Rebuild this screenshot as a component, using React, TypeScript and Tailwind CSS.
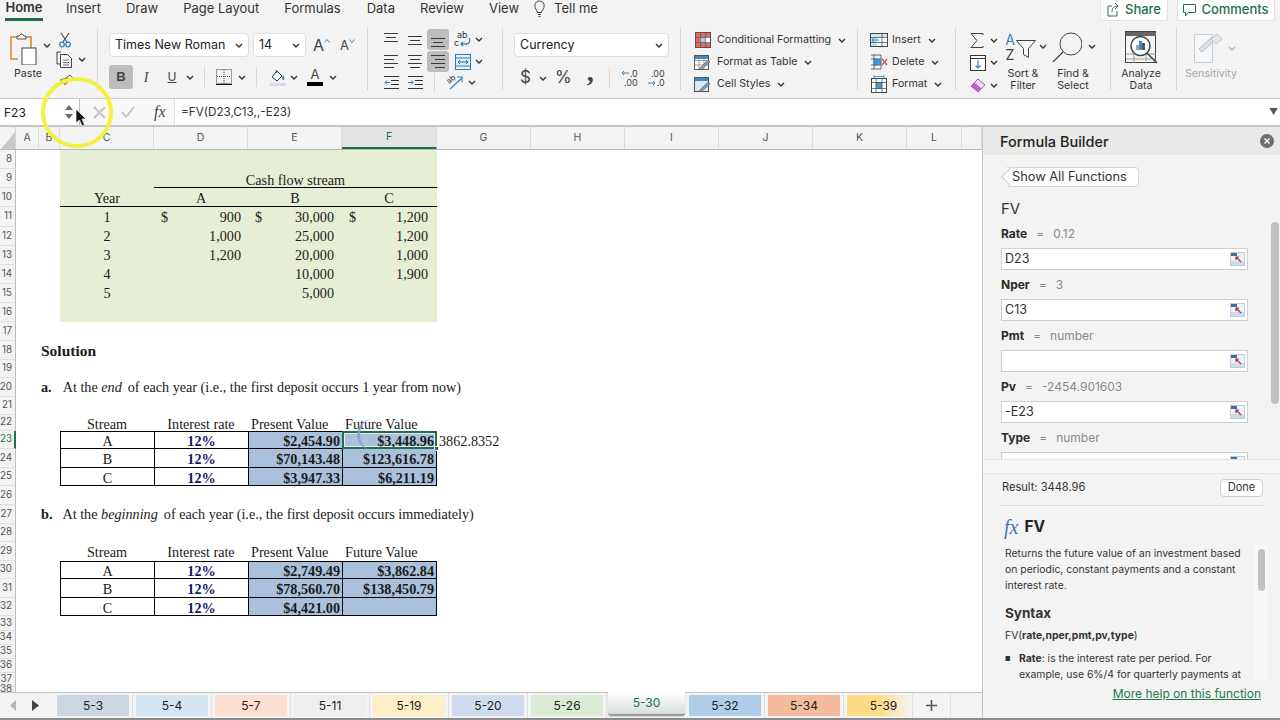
import React from 'react';

const Svg = ({ w, h, className, children }: { w: number; h: number; className?: string; children: React.ReactNode }) => (
  <svg width={w} height={h} viewBox={`0 0 ${w} ${h}`} fill="none" className={`shrink-0 ${className || ''}`}>
    {children}
  </svg>
);

const Caret = ({ className = '', color = '#333' }: { className?: string; color?: string }) => (
  <Svg w={8} h={5} className={className}>
    <path d="M1 1l3 3 3-3" stroke={color} strokeWidth="1.4" />
  </Svg>
);

// three or four horizontal strokes, used by the alignment buttons
const Lines = ({ rows }: { rows: number[][] }) => (
  <Svg w={16} h={16}>
    {rows.map((r, i) => (
      <path key={i} d={`M${r[0]} ${r[2]}.5H${r[1]}`} stroke="#3a3a3a" strokeWidth="1" />
    ))}
  </Svg>
);

const PasteIcon = () => (
  <Svg w={30} h={32}>
    <path d="M8 4H2v22h7" stroke="#e0a050" strokeWidth="2" />
    <path d="M17 4h5v11" stroke="#e0a050" strokeWidth="2" />
    <path d="M8 5V3h2l2-2h1l2 2h2v3H8z" fill="#f3f3f3" stroke="#555" />
    <rect x="13" y="15" width="14" height="17" fill="#fff" stroke="#444" />
  </Svg>
);

const CutIcon = () => (
  <Svg w={12} h={16}>
    <path d="M2 1l6 9M10 1L4 10" stroke="#444" strokeWidth="1.1" />
    <circle cx="3" cy="12.500" r="2.300" stroke="#2f7fbf" strokeWidth="1.3" />
    <circle cx="9" cy="12.500" r="2.300" stroke="#2f7fbf" strokeWidth="1.3" />
  </Svg>
);

const CopyIcon = () => (
  <Svg w={17} h={17}>
    <path d="M5 1H1v12h3" stroke="#444" />
    <path d="M4.500 3.500h7l4 4v9h-11z" fill="#f6f6f6" stroke="#444" />
    <path d="M7 9h6M7 11.500h6M7 14h6" stroke="#555" strokeWidth=".8" />
  </Svg>
);

const PainterIcon = () => (
  <Svg w={15} h={12}>
    <path d="M1 6l5 5 4-4-3-3z" fill="#e9a76a" stroke="#d07b35" />
    <path d="M7 4l4-3 3 3-3 3z" fill="#f2f2f2" stroke="#555" />
  </Svg>
);

const FillIcon = () => (
  <Svg w={16} h={19}>
    <path d="M2 9l5-6 5 5-5 5z" fill="#fff" stroke="#333" />
    <path d="M6 2l1 3" stroke="#333" />
    <path d="M13 7c1 2 2 3 1 5-1 0-2-1-2-2z" fill="#2f7fbf" />
    <rect x="0" y="15" width="16" height="3" fill="#d3dde9" />
  </Svg>
);

const BorderIcon = () => (
  <Svg w={16} h={16}>
    <rect x=".5" y=".5" width="15" height="14" stroke="#444" strokeDasharray="1 1" />
    <path d="M8 1v13M1 7.500h14" stroke="#444" strokeDasharray="1 1" />
    <path d="M0 15.500h16" stroke="#111" />
  </Svg>
);

const WrapIcon = () => (
  <div className="relative w-[18px] h-[18px] text-[9px] leading-[8px] text-[#333]">
    <div className="pl-[3px]">ab</div>
    <div>c</div>
    <Svg w={18} h={18} className="absolute left-0 top-0">
      <path d="M15 7c2 3 0 6-3 6H7m2-2l-2 2 2 2" stroke="#2f86c4" strokeWidth="1.3" />
    </Svg>
  </div>
);

const MergeIcon = () => (
  <Svg w={16} h={16}>
    <rect x=".5" y=".5" width="15" height="15" fill="#e4f0f8" stroke="#2c7db5" />
    <path d="M1 4h14M1 12h14" stroke="#2c7db5" />
    <path d="M3 8h10M5 6L3 8l2 2M11 6l2 2-2 2" stroke="#1f6fa6" />
  </Svg>
);

const IndentIcon = ({ right }: { right?: boolean }) => (
  <Svg w={15} h={13}>
    <path d="M0 .5h15M7 4.500h8M7 8.500h8M0 12.500h15" stroke="#333" />
    {right ? <path d="M0 6.500h5M3 4.500l2 2-2 2" stroke="#2f86c4" /> : <path d="M6 6.500H1M3 4.500l-2 2 2 2" stroke="#2f86c4" />}
  </Svg>
);

const OrientIcon = () => (
  <div className="relative w-[18px] h-[17px]">
    <span className="absolute left-0 top-[1px] text-[8px] leading-[8px] text-[#333] -rotate-40">ab</span>
    <Svg w={18} h={17} className="absolute left-0 top-0">
      <path d="M4 15L16 4M11 3h5v5" stroke="#2f86c4" strokeWidth="1.2" />
    </Svg>
  </div>
);

const DecimalIcon = ({ more }: { more?: boolean }) => (
  <div className="relative w-[17px] h-[18px] text-[9px] leading-[9px] text-[#444]">
    <div className="text-right">{more ? '.0' : '.00'}</div>
    <div className="text-right">{more ? '.00' : '.0'}</div>
    <Svg w={8} h={6} className={`absolute left-0 ${more ? 'top-[1px]' : 'top-[11px]'}`}>
      <path d={more ? 'M8 3H1m2-2L1 3l2 2' : 'M0 3h7M5 1l2 2-2 2'} stroke="#2f86c4" />
    </Svg>
  </div>
);

const CondIcon = () => (
  <Svg w={16} h={16}>
    <rect x=".5" y=".5" width="15" height="15" fill="#fff" stroke="#555" />
    <rect x="1" y="1" width="14" height="4" fill="#e66767" />
    <rect x="1" y="11" width="14" height="4" fill="#e66767" />
    <rect x="1" y="5" width="4" height="6" fill="#e66767" />
    <rect x="6" y="5" width="4" height="6" fill="#a9cbe6" />
    <path d="M5.500 1v14M10.500 1v14M1 5.500h14M1 10.500h14" stroke="#555" strokeWidth=".7" />
  </Svg>
);

const TableIcon = () => (
  <Svg w={17} h={17}>
    <rect x=".5" y="1.500" width="14" height="14" fill="#fff" stroke="#555" />
    <rect x="1" y="2" width="13" height="3" fill="#3d8cc4" />
    <path d="M5 2v13M10 2v13M1 6.500h13M1 11h13" stroke="#777" strokeWidth=".7" />
    <path d="M5 15l9-9 2 2-9 8z" fill="#8d9aa6" stroke="#555" strokeWidth=".6" />
  </Svg>
);

const StyleIcon = () => (
  <Svg w={17} h={17}>
    <rect x=".5" y="1.500" width="14" height="14" fill="#d7e7f3" stroke="#555" />
    <rect x="1" y="2" width="13" height="3" fill="#3d8cc4" />
    <path d="M5 15l9-9 2 2-9 8z" fill="#8d9aa6" stroke="#555" strokeWidth=".6" />
  </Svg>
);

const InsertIcon = () => (
  <Svg w={18} h={14}>
    <rect x=".5" y=".5" width="17" height="13" fill="#fff" stroke="#444" />
    <rect x="1" y="1" width="6" height="12" fill="#bfe0f3" />
    <rect x="1" y="1" width="16" height="3" fill="#cfe6f5" />
    <path d="M1 4.500h16M1 9.500h16M12 1v12" stroke="#444" strokeWidth=".7" />
    <path d="M9 7H2m2-2L2 7l2 2" stroke="#2f86c4" />
  </Svg>
);

const DeleteIcon = () => (
  <Svg w={18} h={16}>
    <path d="M1 1h10M1 5h6M1 11h6M1 15h10M4 1v14M11 1v4M11 11v4" stroke="#444" strokeWidth=".8" />
    <rect x="4" y="5" width="7" height="6" fill="#4a98cf" stroke="#2c7db5" />
    <path d="M12 5l5 6M17 5l-5 6" stroke="#e04a4a" strokeWidth="1.3" />
  </Svg>
);

const FormatIcon = () => (
  <Svg w={17} h={18}>
    <rect x=".5" y="3.500" width="15" height="14" fill="#fff" stroke="#444" />
    <rect x="5" y="7" width="6" height="7" fill="#4a98cf" />
    <path d="M5 4v13M11 4v13M1 7.500h14M1 13.500h14" stroke="#444" strokeWidth=".7" />
    <path d="M3 1.500h10M3 0v3M13 0v3" stroke="#2f86c4" strokeWidth=".8" />
  </Svg>
);

const SumIcon = () => (
  <Svg w={14} h={15}>
    <path d="M13 2V.5H1L7 7.500l-6 7h12V13" stroke="#444" />
  </Svg>
);

const FillDownIcon = () => (
  <Svg w={16} h={16}>
    <rect x=".5" y=".5" width="15" height="15" fill="#fff" stroke="#333" />
    <path d="M1 3.500h14" stroke="#333" />
    <path d="M8 5v8M5.500 10.500L8 13l2.500-2.500" stroke="#2f86c4" strokeWidth="1.2" />
  </Svg>
);

const EraserIcon = () => (
  <Svg w={16} h={15}>
    <path d="M1 8l7-7 7 6-7 7z" fill="#f5d7f3" stroke="#a55bb8" />
    <path d="M1 8l3.500-3.500 7 6L8 14z" fill="#b667c9" />
  </Svg>
);

const SortIcon = () => (
  <div className="flex w-[32px] h-[30px]">
    <div className="w-[12px] flex flex-col items-center text-[14px] leading-[15px]">
      <span className="text-[#2f86c4]">A</span>
      <span className="text-[#444]">Z</span>
    </div>
    <Svg w={20} h={30}>
      <path d="M.5 8.500h19l-7 8v9l-5-3v-6z" fill="#f6f6f6" stroke="#444" />
    </Svg>
  </div>
);

const SearchIcon = () => (
  <Svg w={30} h={30}>
    <circle cx="19" cy="12" r="11" stroke="#444" />
    <path d="M11 20L1 30" stroke="#444" strokeWidth="1.2" />
  </Svg>
);

const AnalyzeIcon = () => (
  <Svg w={33} h={33}>
    <rect x=".5" y=".5" width="30" height="31" fill="#f6f6f6" stroke="#444" />
    <rect x="1" y="1" width="30" height="4" fill="#666" />
    <path d="M1 23h30M1 28h30M9 23v9M21 23v9" stroke="#999" />
    <circle cx="15.500" cy="15" r="9.500" fill="#fff" stroke="#444" strokeWidth="1.5" />
    <rect x="11" y="14" width="3" height="5" fill="#9aa4ad" />
    <rect x="14" y="10" width="3" height="9" fill="#3d8cc4" />
    <rect x="17" y="12" width="3" height="7" fill="#555" />
    <path d="M22 22l10 10" stroke="#444" strokeWidth="1.6" />
  </Svg>
);

const SensitivityIcon = () => (
  <Svg w={30} h={29}>
    <path d="M.5.500h18v28H.5z" fill="#f6f6f6" stroke="#bcd3df" />
    <path d="M5 15L18 3l3 3L8 18z" fill="#dfe2e4" stroke="#b8bcc0" />
    <path d="M17 5l6-5 5 5-6 5z" fill="#e4e6e8" stroke="#c0c4c8" />
  </Svg>
);

const RefIcon = () => (
  <Svg w={15} h={14}>
    <rect x=".5" y=".5" width="14" height="13" fill="#eef3f8" stroke="#c4ccd4" />
    <rect x="1" y="1" width="6" height="3" fill="#3c6ea8" />
    <rect x="1" y="9" width="13" height="4" fill="#cddcea" />
    <path d="M11 10L6 5M6 8V5h3" stroke="#a8323c" strokeWidth="1.2" />
  </Svg>
);

const Select = ({ label, w }: { label: string; w: string }) => (
  <div className={`${w} h-[24px] flex items-center justify-between pl-[5px] pr-[5px] bg-white border border-[#dedede] rounded-[4px] text-[12.500px] text-[#222]`}>
    <span>{label}</span>
    <Caret />
  </div>
);

const Group = ({ w, className = '', children }: { w: string; className?: string; children: React.ReactNode }) => (
  <div className={`${w} shrink-0 h-[62px] mt-[2px] border-r border-[#d6d6d6] ${className}`}>{children}</div>
);

const StyleRow = ({ icon, label, w, gap = 'ml-[6px]' }: { icon: React.ReactNode; label: string; w: string; gap?: string }) => (
  <div className="flex items-center h-[22px]">
    <div className={`${w} flex justify-center`}>{icon}</div>
    <span className={`${gap} text-[10.700px] text-[#333] whitespace-nowrap`}>{label}</span>
    <Caret className="ml-[7px]" />
  </div>
);

const Ribbon = () => (
  <div className="h-[99px] bg-[#f3f3f3] border-b border-[#c9c9c9] relative">
    <div className="flex h-[26px] text-[13px] text-[#333]">
      <div className="ml-[5px] w-[38px] h-[21px] border-b-[3px] border-[#1f6e47] flex justify-center">
        <span className="font-semibold -mt-[2px]">Home</span>
      </div>
      <span className="ml-[23px] -mt-[1px]">Insert</span>
      <span className="ml-[25px] -mt-[1px]">Draw</span>
      <span className="ml-[25px] -mt-[1px]">Page Layout</span>
      <span className="ml-[25px] -mt-[1px]">Formulas</span>
      <span className="ml-[26px] -mt-[1px]">Data</span>
      <span className="ml-[25px] -mt-[1px]">Review</span>
      <span className="ml-[25px] -mt-[1px]">View</span>
      <Svg w={13} h={17} className="ml-[14px]">
        <path d="M3.500 10C1 7.500 1 1 6.500 1S12 7.500 9.500 10c-.5.5-1 1.500-1 2.500h-4c0-1-.500-2-1-2.500zM5 14.500h3M5.500 16.500h2" stroke="#444" />
      </Svg>
      <span className="ml-[8px] -mt-[1px]">Tell me</span>
      <div className="ml-auto flex text-[#22704c] font-medium">
        <div className="w-[68px] h-[21px] flex items-center justify-center gap-[5px] bg-white border border-t-0 border-[#e2e2e2] rounded-b-[3px]">
          <Svg w={13} h={14}>
            <path d="M5 3H1v10h9V8M5 9c0-4 2-6 6-6M8 0l3 3-3 3" stroke="#22704c" />
          </Svg>
          Share
        </div>
        <div className="ml-[9px] mr-[5px] w-[98px] h-[21px] flex items-center justify-center gap-[5px] bg-white border border-t-0 border-[#e2e2e2] rounded-b-[3px]">
          <Svg w={13} h={14}>
            <path d="M.5 1.500h12v8H5L2.500 13V9.500h-2z" stroke="#22704c" />
          </Svg>
          Comments
        </div>
      </div>
    </div>

    <div className="flex h-[72px]">
      {/* Clipboard */}
      <Group w="w-[98px]" className="flex">
        <div className="w-[47px] ml-[9px] pt-[5px] flex flex-col items-start">
          <div className="flex items-center">
            <PasteIcon />
            <Caret className="ml-[4px] -mt-[8px]" />
          </div>
          <span className="ml-[5px] mt-[1px] text-[10.700px] text-[#333]">Paste</span>
        </div>
        <div className="pt-[4px] flex flex-col items-start">
          <div className="ml-[3px]"><CutIcon /></div>
          <div className="flex items-center mt-[3px]">
            <CopyIcon />
            <Caret className="ml-[5px]" />
          </div>
          <div className="ml-[3px] mt-[6px]"><PainterIcon /></div>
        </div>
      </Group>

      {/* Font */}
      <Group w="w-[270px]" className="pl-[11px] pt-[5px]">
        <div className="flex items-center">
          <Select label="Times New Roman" w="w-[140px]" />
          <Select label="14" w="w-[53px] ml-[4px]" />
          <span className="ml-[7px] text-[16px] text-[#444] leading-none">A</span>
          <Svg w={6} h={4} className="-mt-[8px]"><path d="M.5 3.500l2.500-3 2.500 3" stroke="#2f86c4" /></Svg>
          <span className="ml-[10px] text-[13px] text-[#444] leading-none">A</span>
          <Svg w={6} h={4} className="-mt-[8px]"><path d="M.5.500l2.500 3 2.500-3" stroke="#2f86c4" /></Svg>
        </div>
        <div className="flex items-center mt-[8px] h-[24px] text-[#444]">
          <div className="w-[24px] h-[24px] bg-[#bdbdbd] rounded-[3px] flex items-center justify-center font-['Liberation_Sans',sans-serif] font-bold text-[13px]">B</div>
          <span className="ml-[8px] w-[10px] text-center font-['Liberation_Serif',serif] italic text-[14px]">I</span>
          <span className="ml-[16px] w-[10px] text-center underline text-[12px]">U</span>
          <Caret className="ml-[9px]" />
          <div className="ml-[10px] w-px h-[20px] bg-[#d6d6d6]" />
          <div className="ml-[11px]"><BorderIcon /></div>
          <Caret className="ml-[6px]" />
          <div className="ml-[10px] w-px h-[20px] bg-[#d6d6d6]" />
          <div className="ml-[13px]"><FillIcon /></div>
          <Caret className="ml-[4px]" />
          <div className="ml-[9px] w-[16px] flex flex-col items-center">
            <span className="text-[13px] leading-[13px]">A</span>
            <div className="w-[16px] h-[4px] mt-[1px] bg-black" />
          </div>
          <Caret className="ml-[6px]" />
        </div>
      </Group>

      {/* Alignment */}
      <Group w="w-[135px]" className="pl-[11px] pt-[1px]">
        <div className="flex items-center h-[21px]">
          <div className="w-[24px] flex justify-center"><Lines rows={[[1, 15, 1], [3, 13, 5], [1, 15, 9]]} /></div>
          <div className="w-[24px] flex justify-center"><Lines rows={[[1, 15, 4], [3, 13, 8], [1, 15, 12]]} /></div>
          <div className="w-[22px] h-[21px] bg-[#bdbdbd] rounded-[3px] flex justify-center items-center"><Lines rows={[[1, 15, 6], [3, 13, 10], [1, 15, 14]]} /></div>
          <div className="ml-[5px]"><WrapIcon /></div>
          <Caret className="ml-[3px]" />
        </div>
        <div className="flex items-center h-[21px] mt-[1px]">
          <div className="w-[24px] flex justify-center"><Lines rows={[[1, 15, 1], [1, 11, 5], [1, 15, 9], [1, 11, 13]]} /></div>
          <div className="w-[24px] flex justify-center"><Lines rows={[[1, 15, 1], [3, 13, 5], [1, 15, 9], [3, 13, 13]]} /></div>
          <div className="w-[22px] h-[21px] bg-[#bdbdbd] rounded-[3px] flex justify-center items-center"><Lines rows={[[1, 15, 1], [5, 15, 5], [1, 15, 9], [5, 15, 13]]} /></div>
          <div className="ml-[6px]"><MergeIcon /></div>
          <Caret className="ml-[4px]" />
        </div>
        <div className="flex items-center h-[20px]">
          <div className="w-[24px] flex justify-center"><IndentIcon /></div>
          <div className="w-[24px] flex justify-center"><IndentIcon right /></div>
          <div className="ml-[7px] w-px h-[19px] bg-[#d6d6d6]" />
          <div className="ml-[11px]"><OrientIcon /></div>
          <Caret className="ml-[4px]" />
        </div>
      </Group>

      {/* Number */}
      <Group w="w-[178px]" className="pl-[11px] pt-[5px]">
        <Select label="Currency" w="w-[155px]" />
        <div className="flex items-center mt-[10px] h-[22px] text-[#444]">
          <span className="ml-[6px] w-[10px] text-[17px] text-center">$</span>
          <Caret className="ml-[9px]" />
          <span className="ml-[8px] text-[17px]">%</span>
          <span className="ml-[15px] font-['Liberation_Serif',serif] font-bold text-[28px] leading-none -mt-[13px]">,</span>
          <div className="ml-[15px] w-px h-[19px] bg-[#d6d6d6]" />
          <div className="ml-[11px]"><DecimalIcon more /></div>
          <div className="ml-[10px]"><DecimalIcon /></div>
        </div>
      </Group>

      {/* Styles */}
      <Group w="w-[177px]" className="pl-[13px] pt-[0px]">
        <div className="pt-[1px]">
          <StyleRow icon={<CondIcon />} label="Conditional Formatting" w="w-[17px]" />
          <StyleRow icon={<TableIcon />} label="Format as Table" w="w-[17px]" />
          <StyleRow icon={<StyleIcon />} label="Cell Styles" w="w-[17px]" />
        </div>
      </Group>

      {/* Cells */}
      <Group w="w-[98px]" className="pl-[12px]">
        <div className="pt-[1px]">
          <StyleRow icon={<InsertIcon />} label="Insert" w="w-[18px]" gap="ml-[4px]" />
          <StyleRow icon={<DeleteIcon />} label="Delete" w="w-[18px]" gap="ml-[4px]" />
          <StyleRow icon={<FormatIcon />} label="Format" w="w-[18px]" gap="ml-[4px]" />
        </div>
      </Group>

      {/* Editing */}
      <Group w="w-[155px]" className="flex pl-[14px]">
        <div className="w-[32px] pt-[1px]">
          <div className="flex items-center h-[22px]"><SumIcon /><Caret className="ml-[6px]" /></div>
          <div className="flex items-center h-[23px]"><FillDownIcon /><Caret className="ml-[4px]" /></div>
          <div className="flex items-center h-[23px]"><EraserIcon /><Caret className="ml-[4px]" /></div>
        </div>
        <div className="ml-[2px] w-[48px] pt-[4px] flex flex-col items-start">
          <div className="flex items-center h-[30px]"><SortIcon /><Caret className="ml-[3px] -mt-[2px]" /></div>
          <div className="w-[38px] mt-[6px] text-center text-[10.700px] leading-[12px] text-[#333] whitespace-nowrap">Sort &amp;<br />Filter</div>
        </div>
        <div className="pt-[4px] flex flex-col items-start">
          <div className="flex items-center h-[30px]"><SearchIcon /><Caret className="ml-[6px] -mt-[2px]" /></div>
          <div className="w-[42px] mt-[6px] text-center text-[10.700px] leading-[12px] text-[#333] whitespace-nowrap">Find &amp;<br />Select</div>
        </div>
      </Group>

      {/* Analyze */}
      <Group w="w-[66px]" className="flex flex-col items-center pt-[3px] pr-[5px]">
        <AnalyzeIcon />
        <div className="mt-[4px] text-center text-[10.500px] leading-[12px] text-[#333]">Analyze<br />Data</div>
      </Group>

      {/* Sensitivity */}
      <div className="pl-[8px] pt-[6px] mt-[2px] w-[72px]">
        <div className="flex items-center pl-[9px]">
          <SensitivityIcon />
          <Caret className="ml-[4px]" color="#b5b5b5" />
        </div>
        <div className="mt-[5px] text-[10.700px] leading-[12px] text-[#a8a8a8]">Sensitivity</div>
      </div>
    </div>
  </div>
);

const FormulaBar = () => (
  <div className="flex items-center h-[28px] bg-white border-b-2 border-[#c4c4c4]">
    <div className="w-[80px] h-full flex items-center justify-between pl-[4px] pr-[3px] border-r border-[#bdbdbd] text-[12px] text-[#222]">
      <span className="mt-[1px]">F23</span>
      <Svg w={8} h={16} className="mr-[3px]">
        <path d="M4 1l4 5H0zM0 10h8l-4 5z" fill="#6a6a6a" />
      </Svg>
    </div>
    <div className="w-[95px] h-full flex items-center bg-[#f8f8f8] border-r border-[#e2e2e2]">
      <Svg w={13} h={13} className="ml-[13px]">
        <path d="M1 1l11 11M12 1L1 12" stroke="#c4c4c4" strokeWidth="2.200" />
      </Svg>
      <Svg w={14} h={12} className="ml-[15px]">
        <path d="M1 6l4 5 8-10" stroke="#c8c8c8" strokeWidth="2" />
      </Svg>
      <span className="ml-[19px] font-['Liberation_Serif',serif] italic text-[16px] text-[#444]">fx</span>
    </div>
    <span className="ml-[6px] mt-[2px] text-[11.700px] text-[#333]">=FV(D23,C13,,-E23)</span>
    <span className="ml-auto mr-[2px] text-[9px] text-[#555]">▼</span>
  </div>
);

const columns = [
  { label: 'A', w: 'w-[23px]' },
  { label: 'B', w: 'w-[21px]' },
  { label: 'C', w: 'w-[94px]' },
  { label: 'D', w: 'w-[94px]' },
  { label: 'E', w: 'w-[94px]' },
  { label: 'F', w: 'w-[95px]', active: true },
  { label: 'G', w: 'w-[94px]' },
  { label: 'H', w: 'w-[94px]' },
  { label: 'I', w: 'w-[94px]' },
  { label: 'J', w: 'w-[94px]' },
  { label: 'K', w: 'w-[94px]' },
  { label: 'L', w: 'w-[55px]' },
  { label: '', w: 'flex-1' },
];

const ColumnHeader = () => (
  <div className="flex h-[23px] bg-[#f3f3f3] border-b border-[#b8b8b8] text-[10.500px] text-[#555]">
    <div className="w-[16px] shrink-0 border-r border-[#d4d4d4] flex items-end">
      <Svg w={15} h={22}>
        <path d="M15 5v17H1z" fill="#c9c9c9" />
      </Svg>
    </div>
    {columns.map((c) => (
      <div
        key={c.label}
        className={`${c.w} shrink-0 flex items-center justify-center border-r border-[#dcdcdc] ${c.active ? 'bg-[#e3e3e3] border-b-2 border-b-[#1f6e47] text-[#1f6e47]' : ''}`}
      >
        {c.label}
      </div>
    ))}
  </div>
);

const Row = ({ n, h, active, children }: { n: number; h: string; active?: boolean; children?: React.ReactNode }) => (
  <div className={`flex ${h} shrink-0`}>
    <div
      className={`w-[16px] shrink-0 flex items-center justify-end bg-[#f3f3f3] border-b border-[#dedede] font-['Inter',sans-serif] text-[9.800px] font-normal ${
        active ? 'bg-[#e3e3e3] border-r-2 border-r-[#1f6e47] pr-[2px] text-[#1f6e47]' : 'border-r border-r-[#bdbdbd] pr-[3px] text-[#555]'
      }`}
    >
      {n}
    </div>
    {children}
  </div>
);

const Money = ({ sign, value, pr = 'pr-[7px]' }: { sign?: boolean; value?: string; pr?: string }) => (
  <div className={`w-[94px] flex items-end justify-between pl-[7px] pb-[1px] ${pr}`}>
    <span>{sign ? '$' : ''}</span>
    <span>{value}</span>
  </div>
);

const GreenRow = ({ n, h, children, line }: { n: number; h: string; children?: React.ReactNode; line?: string }) => (
  <Row n={n} h={h}>
    <div className={`ml-[44px] w-[377px] flex leading-[18px] bg-[#e6eed3] ${line || ''}`}>{children}</div>
  </Row>
);

const YearRow = ({ n, y, a, b, c, sign }: { n: number; y: number; a?: string; b?: string; c?: string; sign?: boolean }) => (
  <GreenRow n={n} h={n === 11 ? 'h-[20px]' : 'h-[19px]'}>
    <div className="w-[94px] flex items-end justify-center pb-[1px]">{y}</div>
    <Money sign={sign} value={a} />
    <Money sign={sign} value={b} pr="pr-[8px]" />
    <Money sign={sign} value={c} pr="pr-[8px]" />
  </GreenRow>
);

const TableHead = ({ n, h, lead }: { n: number; h: string; lead: string }) => (
  <Row n={n} h={h}>
    <div className={`ml-[44px] flex items-end ${lead} whitespace-nowrap`}>
      <div className="w-[94px] text-center">Stream</div>
      <div className="w-[94px] text-center">Interest rate</div>
      <div className="w-[94px] pl-[3px]">Present Value</div>
      <div className="w-[94px] pl-[3px]">Future Value</div>
    </div>
  </Row>
);

const DataRow = ({ n, h, name, pv, fv, first, selected, note }: { n: number; h: string; name: string; pv: string; fv?: string; first?: boolean; selected?: boolean; note?: string }) => {
  const txt = first ? 'leading-[18px]' : 'pt-px leading-[18px]';
  return (
    <Row n={n} h={h} active={selected}>
      <div className={`ml-[44px] w-[377px] flex border-b border-l border-r border-black ${first ? 'border-t' : ''}`}>
        <div className={`${txt} w-[94px] text-center border-r border-black`}>{name}</div>
        <div className={`${txt} w-[94px] text-center font-bold text-[#14146e] border-r border-black`}>12%</div>
        <div className={`${txt} w-[94px] text-right pr-[2px] font-bold bg-[#a9c1dc] border-r border-black`}>{pv}</div>
        <div className={`${txt} flex-1 text-right pr-[2px] font-bold bg-[#a9c1dc] relative ${selected ? 'outline-2 -outline-offset-1 outline-[#1f6e47] shadow-[inset_0_0_0_2px_#dfeee6]' : ''}`}>
          {fv}
          {selected && <div className="absolute left-[14px] -top-[13px] w-[32px] h-[31px] rounded-full border-l-[3px] border-[#7f9fd0] opacity-80" />}
          {selected && <div className="absolute -right-[3px] -bottom-[3px] w-[5px] h-[5px] bg-[#1f6e47] border border-white" />}
        </div>
      </div>
      {note && <span className="ml-[2px] leading-[20px]">{note}</span>}
    </Row>
  );
};

const Sheet = () => (
  <div className="h-[565px] overflow-hidden bg-white flex flex-col relative">
    <ColumnHeader />
    <div className="flex-1 overflow-hidden font-['Liberation_Serif',serif] text-[14.200px] text-[#1a1a1a] whitespace-nowrap">
      <GreenRow n={8} h="h-[19px]" />
      <GreenRow n={9} h="h-[19px]">
        <div className="ml-[94px] flex-1 flex items-end justify-center leading-[14px] border-b border-black">Cash flow stream</div>
      </GreenRow>
      <GreenRow n={10} h="h-[19px]" line="border-b border-black">
        <div className="w-[94px] flex items-end justify-center leading-[16px]">Year</div>
        <div className="w-[94px] flex items-end justify-center leading-[16px]">A</div>
        <div className="w-[94px] flex items-end justify-center leading-[16px]">B</div>
        <div className="w-[94px] flex items-end justify-center leading-[16px]">C</div>
      </GreenRow>
      <YearRow n={11} y={1} a="900" b="30,000" c="1,200" sign />
      <YearRow n={12} y={2} a="1,000" b="25,000" c="1,200" />
      <YearRow n={13} y={3} a="1,200" b="20,000" c="1,000" />
      <YearRow n={14} y={4} b="10,000" c="1,900" />
      <YearRow n={15} y={5} b="5,000" />
      <GreenRow n={16} h="h-[19px]" />
      <Row n={17} h="h-[19px]" />
      <Row n={18} h="h-[19px]">
        <span className="ml-[25px] font-bold text-[15.500px] leading-[19px]">Solution</span>
      </Row>
      <Row n={19} h="h-[18px]" />
      <Row n={20} h="h-[19px]">
        <span className="ml-[25px] leading-[19px]">
          <b>a.</b>
          <span className="ml-[11px]">At the <i>end</i><span className="ml-[6px]">of each year (i.e., the first deposit occurs 1 year from now)</span></span>
        </span>
      </Row>
      <Row n={21} h="h-[18px]" />
      <TableHead n={22} h="h-[16px]" lead="leading-[14px]" />
      <DataRow n={23} h="h-[18px]" name="A" pv="$2,454.90" fv="$3,448.96" first selected note="3862.8352" />
      <DataRow n={24} h="h-[19px]" name="B" pv="$70,143.48" fv="$123,616.78" />
      <DataRow n={25} h="h-[18px]" name="C" pv="$3,947.33" fv="$6,211.19" />
      <Row n={26} h="h-[19px]" />
      <Row n={27} h="h-[19px]">
        <span className="ml-[25px] leading-[19px]">
          <b>b.</b>
          <span className="ml-[10px]">At the <i>beginning</i><span className="ml-[6px]">of each year (i.e., the first deposit occurs immediately)</span></span>
        </span>
      </Row>
      <Row n={28} h="h-[18px]" />
      <TableHead n={29} h="h-[19px]" lead="leading-[18px]" />
      <DataRow n={30} h="h-[18px]" name="A" pv="$2,749.49" fv="$3,862.84" first />
      <DataRow n={31} h="h-[19px]" name="B" pv="$78,560.70" fv="$138,450.79" />
      <DataRow n={32} h="h-[18px]" name="C" pv="$4,421.00" />
      <Row n={33} h="h-[15px]" />
      <Row n={34} h="h-[14px]" />
      <Row n={35} h="h-[14px]" />
      <Row n={36} h="h-[14px]" />
      <Row n={37} h="h-[14px]" />
      <Row n={38} h="h-[5px]" />
    </div>
  </div>
);

const tabs = [
  { label: '5-3', bg: 'bg-[#ccd6e0]' },
  { label: '5-4', bg: 'bg-[#d4e6f2]' },
  { label: '5-7', bg: 'bg-[#fbe0d0]' },
  { label: '5-11', bg: 'bg-[#eeeeee]' },
  { label: '5-19', bg: 'bg-[#fdeec8]' },
  { label: '5-20', bg: 'bg-[#d0dcee]' },
  { label: '5-26', bg: 'bg-[#dcecd4]' },
  { label: '5-30', bg: 'bg-gradient-to-b from-white to-[#d8dedc] text-[#1f6e47]', active: true },
  { label: '5-32', bg: 'bg-[#aecde9]' },
  { label: '5-34', bg: 'bg-[#f4bc9c]' },
];

const SheetTabs = () => (
  <div className="h-[26px] flex bg-[#f3f3f3] border-t border-[#c4c4c4] text-[12px] text-[#222]">
    <div className="w-[54px] shrink-0 flex items-center pl-[10px]">
      <Svg w={7} h={11}><path d="M6 0v11L0 5.500z" fill="#b5b5b5" /></Svg>
      <Svg w={7} h={11} className="ml-[15px]"><path d="M0 0v11l7-5.500z" fill="#444" /></Svg>
    </div>
    {tabs.map((t) => (
      <div key={t.label} className={`w-[79px] shrink-0 flex ${t.active ? 'pb-[2px]' : 'py-[2px] border-r border-[#e0e0e0]'}`}>
        <div
          className={`flex-1 flex items-center justify-center ${t.bg} ${t.active ? 'mx-[1px] -mt-px border-b-2 border-[#999] rounded-b-[3px] shadow-sm' : 'mx-[3px] pt-px'}`}
        >
          {t.label}
        </div>
      </div>
    ))}
    <div className="w-[69px] shrink-0 py-[2px] flex border-r border-[#e0e0e0]">
      <div className="flex-1 ml-[3px] flex items-center justify-center pl-[8px] bg-gradient-to-r from-[#fddc85] via-[#fddc85] to-[#f3f3f3]">5-39</div>
    </div>
    <div className="w-[38px] shrink-0 flex items-center justify-center border-r border-[#e0e0e0] text-[#444]">
      <Svg w={11} h={11}><path d="M5.500 0v11M0 5.500h11" stroke="#555" strokeWidth="1.600" /></Svg>
    </div>
  </div>
);

const Arg = ({ name, value }: { name: string; value: string }) => (
  <div className="pt-[5px] pb-[4px]">
    <div className="flex items-center h-[20px] text-[12px] text-[#8a8a8a]">
      <b className="text-[#2a2a2a]">{name}</b>
      <span className="mx-[9px]">=</span>
      <span>{value}</span>
    </div>
  </div>
);

const Field = ({ value }: { value?: string }) => (
  <div className="w-[247px] h-[22px] flex items-center justify-between pl-[3px] pr-[2px] bg-white border border-[#cfcfcf] text-[12.500px] text-[#333]">
    <span>{value}</span>
    <RefIcon />
  </div>
);

const FormulaBuilder = () => (
  <div className="w-[298px] shrink-0 h-[591px] flex flex-col overflow-hidden bg-[#f3f3f3] border-l border-[#c4c4c4]">
    <div className="h-[28px] shrink-0 flex items-center justify-between pl-[17px] pr-[6px] bg-[#e9e9e7]">
      <span className="mt-[1px] text-[14.500px] font-medium text-[#222]">Formula Builder</span>
      <div className="w-[14px] h-[14px] rounded-full bg-[#6e6e6e] flex items-center justify-center">
        <Svg w={6} h={6}><path d="M.5.500l5 5M5.500.500l-5 5" stroke="#fff" strokeWidth="1.300" /></Svg>
      </div>
    </div>

    <div className="relative ml-[24px] mt-[12px] w-[132px] h-[20px] shrink-0 flex items-center pl-[5px] bg-white border border-l-0 border-[#d6d6d6] rounded-r-[4px] text-[12.800px] text-[#333] whitespace-nowrap">
      <div className="absolute -left-[3px] top-[2px] w-[14px] h-[14px] rotate-45 bg-white border-l border-b border-[#cfcfcf]" />
      <span className="relative">Show All Functions</span>
    </div>

    <div className="ml-[18px] mt-[12px] text-[15px] leading-[20px] text-[#333]">FV</div>

    <div className="relative h-[240px] shrink-0 overflow-hidden pl-[18px]">
      <Arg name="Rate" value="0.12" />
      <Field value="D23" />
      <Arg name="Nper" value="3" />
      <Field value="C13" />
      <Arg name="Pmt" value="number" />
      <Field />
      <Arg name="Pv" value="-2454.901603" />
      <Field value="-E23" />
      <Arg name="Type" value="number" />
      <Field />
      <div className="absolute right-[1px] top-[3px] w-[8px] h-[182px] rounded-full bg-[#c2c2c2]" />
    </div>

    <div className="h-[15px] shrink-0 bg-[#f7f7f7] border-y border-[#e2e2e2]" />

    <div className="h-[32px] shrink-0 flex items-center justify-between mx-[17px] border-b border-[#dcdcdc] text-[11.100px] text-[#333]">
      <span className="ml-[2px] -mt-[4px]">Result: 3448.96</span>
      <div className="w-[43px] h-[18px] -mt-[4px] flex items-center justify-center bg-white border border-[#d0d0d0] rounded-[4px]">Done</div>
    </div>

    <div className="flex items-center h-[20px] ml-[21px] mt-[11px] shrink-0">
      <span className="font-['Liberation_Serif',serif] italic text-[20px] text-[#3b78b8]">fx</span>
      <b className="ml-[6px] text-[15.500px] text-[#222]">FV</b>
    </div>

    <div className="relative mt-[8px] h-[135px] shrink-0 overflow-hidden pl-[22px] pr-[30px] text-[10.400px] leading-[16px] text-[#333]">
      <p className="pt-[1px] whitespace-nowrap">
        Returns the future value of an investment based<br />on periodic, constant payments and a constant<br />interest rate.
      </p>
      <div className="mt-[10px] text-[13.500px] leading-[18px] font-bold">Syntax</div>
      <div className="mt-[6px]">FV(<b>rate,nper,pmt,pv,type</b>)</div>
      <div className="mt-[7px] flex whitespace-nowrap">
        <span className="w-[14px] text-[6px]">■</span>
        <span><b>Rate</b>: is the interest rate per period. For<br />example, use 6%/4 for quarterly payments at</span>
      </div>
      <div className="absolute right-[12px] top-0 bottom-0 w-[14px] flex justify-center bg-[#f8f8f8]">
        <div className="w-[7px] h-[42px] mt-[4px] rounded-full bg-[#c2c2c2]" />
      </div>
    </div>

    <div className="mt-[5px] mr-[19px] text-right text-[12px] text-[#25794f] underline">More help on this function</div>
  </div>
);

const App = () => (
  <div className="relative w-[1280px] h-[720px] overflow-hidden bg-[#f3f3f3] font-['Inter',sans-serif]">
    <Ribbon />
    <FormulaBar />
    <div className="flex">
      <div className="w-[982px] shrink-0">
        <Sheet />
        <SheetTabs />
      </div>
      <FormulaBuilder />
    </div>
    <div className="h-[2px] bg-[#8c8c8c]" />

    {/* screen recorder highlight around the pointer */}
    <div className="absolute left-[41px] top-[77px] w-[72px] h-[71px] rounded-full border-[4px] border-[#f1f13f]" />
    <Svg w={13} h={19} className="absolute left-[75px] top-[108px]">
      <path d="M1 1v14l3.500-3 2.500 6 2.500-1-2.500-6H11z" fill="#111" stroke="#fff" strokeWidth=".7" />
    </Svg>
  </div>
);

export default App;
